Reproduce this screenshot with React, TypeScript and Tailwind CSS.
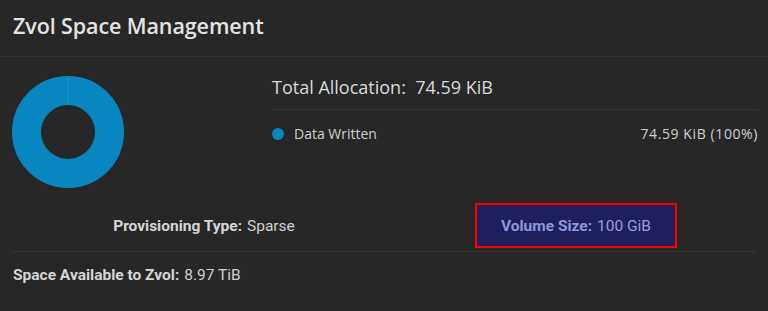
import React from "react";

// --- DATA ---
const fira = { fontFamily: '"Open Sans", "DejaVu Sans", sans-serif' };

function Donut() {
  return (
    <svg width="114" height="114" viewBox="0 0 114 114">
      <circle cx="57" cy="57" r="41.5" fill="none" stroke="#0786bf" strokeWidth="29" />
      <line x1="57" y1="1.5" x2="57" y2="30" stroke="#1696d2" strokeWidth="1" />
    </svg>
  );
}

export default function App() {
  return (
    <div className="w-[768px] h-[311px] bg-[#272727] text-[#d4d4d4] font-['Roboto',sans-serif] overflow-hidden">
      {/* header */}
      <div className="h-[57px] border-b border-[#333333] flex items-center px-[13px] pb-[3px]">
        <h1
          className="text-[21.5px] font-semibold text-[#e4e4e4] tracking-[-0.1px]"
          style={fira}
        >
          Zvol Space Management
        </h1>
      </div>

      {/* chart + legend */}
      <div className="flex h-[139px]">
        <div className="w-[260px] pl-[11px] pt-[18px]">
          <Donut />
        </div>
        <div className="flex-1 pr-[10px] pl-[12px]" style={fira}>
          <div className="pt-[17px] pb-[9px] border-b border-[#343434] text-[18px] leading-[26px] text-[#dadada]">
            Total Allocation:&nbsp; 74.59 KiB
          </div>
          <div className="flex items-center justify-between pt-[14px] text-[14px] leading-[20px] text-[#d0d0d0]">
            <div className="flex items-center gap-[10px]">
              <span className="w-[12px] h-[12px] rounded-full bg-[#0786bf]" />
              <span>Data Written</span>
            </div>
            <span className="tracking-[0.6px]">74.59 KiB (100%)</span>
          </div>
        </div>
      </div>

      {/* provisioning row */}
      <div className="mx-[12px] h-[56px] pt-[7px] border-b border-[#333333] flex items-start text-[15.5px]">
        <div className="w-[372px] pl-[12px] h-[45px] pt-[3px] flex items-center justify-center gap-[5px]">
          <span className="font-bold text-[#d6d6d6]">Provisioning Type:</span>
          <span className="text-[#cfcfcf]">Sparse</span>
        </div>
        <div className="ml-[91px] w-[202px] h-[45px] pt-[3px] border-2 border-[#ff0000] bg-[#1f1f5e] flex items-center justify-center gap-[5px]">
          <span className="font-bold text-[#8f96da]">Volume Size:</span>
          <span className="text-[#969ddf]">100 GiB</span>
        </div>
      </div>

      {/* space available */}
      <div className="px-[13px] pt-[13px] flex items-center gap-[5px] text-[15.5px] leading-[20px]">
        <span className="font-bold text-[#d6d6d6]">Space Available to Zvol:</span>
        <span className="text-[#cfcfcf]">8.97 TiB</span>
      </div>
    </div>
  );
}
